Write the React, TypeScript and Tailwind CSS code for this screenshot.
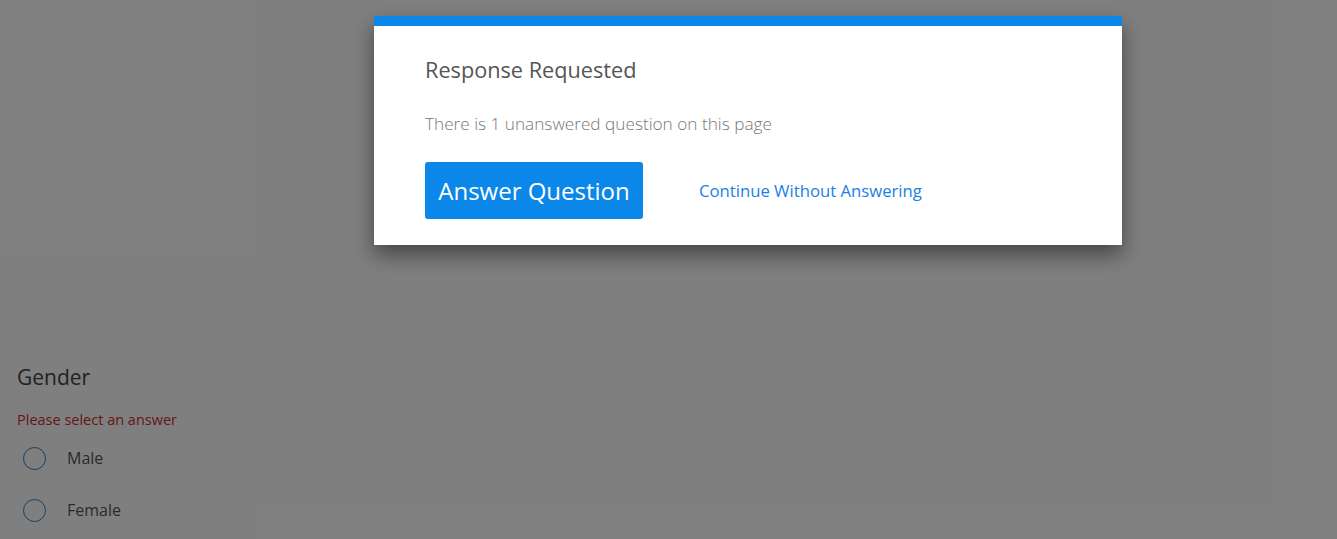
const App = () => {
  return (
    <div className="relative h-[539px] overflow-hidden bg-white" style={{ fontFamily: '"Open Sans", "Noto Sans", sans-serif' }}>
      <section className="pt-[362px] pl-[17px]">
        <h2 className="text-[21px] text-[#444] leading-[30px]">Gender</h2>
        <p className="mt-[18px] text-[14.5px] text-[#c9302c] leading-[20px]">Please select an answer</p>
        <div className="mt-[16px] flex flex-col gap-[28px]">
          {['Male', 'Female'].map((label) => (
            <label key={label} className="flex items-center gap-[21px] pl-[6px] text-[16px] text-[#555] leading-[24px]">
              <span className="w-[23px] h-[23px] rounded-full border-[1.5px] border-[#2a7fd4]" />
              {label}
            </label>
          ))}
        </div>
      </section>

      <div className="absolute inset-0 bg-black/50" />

      <div className="absolute left-[374px] top-[16px] w-[748px] bg-white border-t-[10px] border-[#0a87e8] shadow-[0_10px_20px_rgba(0,0,0,0.45)]">
        <div className="pl-[51px] pt-[30px] pb-[26px]">
          <h1 className="text-[21.7px] text-[#555] leading-[28px]">Response Requested</h1>
          <p className="mt-[28px] text-[17.2px] font-light text-[#777] leading-[24px]">There is 1 unanswered question on this page</p>
          <div className="mt-[26px] flex items-center">
            <button className="w-[218px] h-[57px] rounded-[3px] bg-[#0a87e8] text-white text-[24px]">Answer Question</button>
            <a className="ml-[56px] text-[16.7px] text-[#1a7fe6]">Continue Without Answering</a>
          </div>
        </div>
      </div>
    </div>
  )
}

export default App
